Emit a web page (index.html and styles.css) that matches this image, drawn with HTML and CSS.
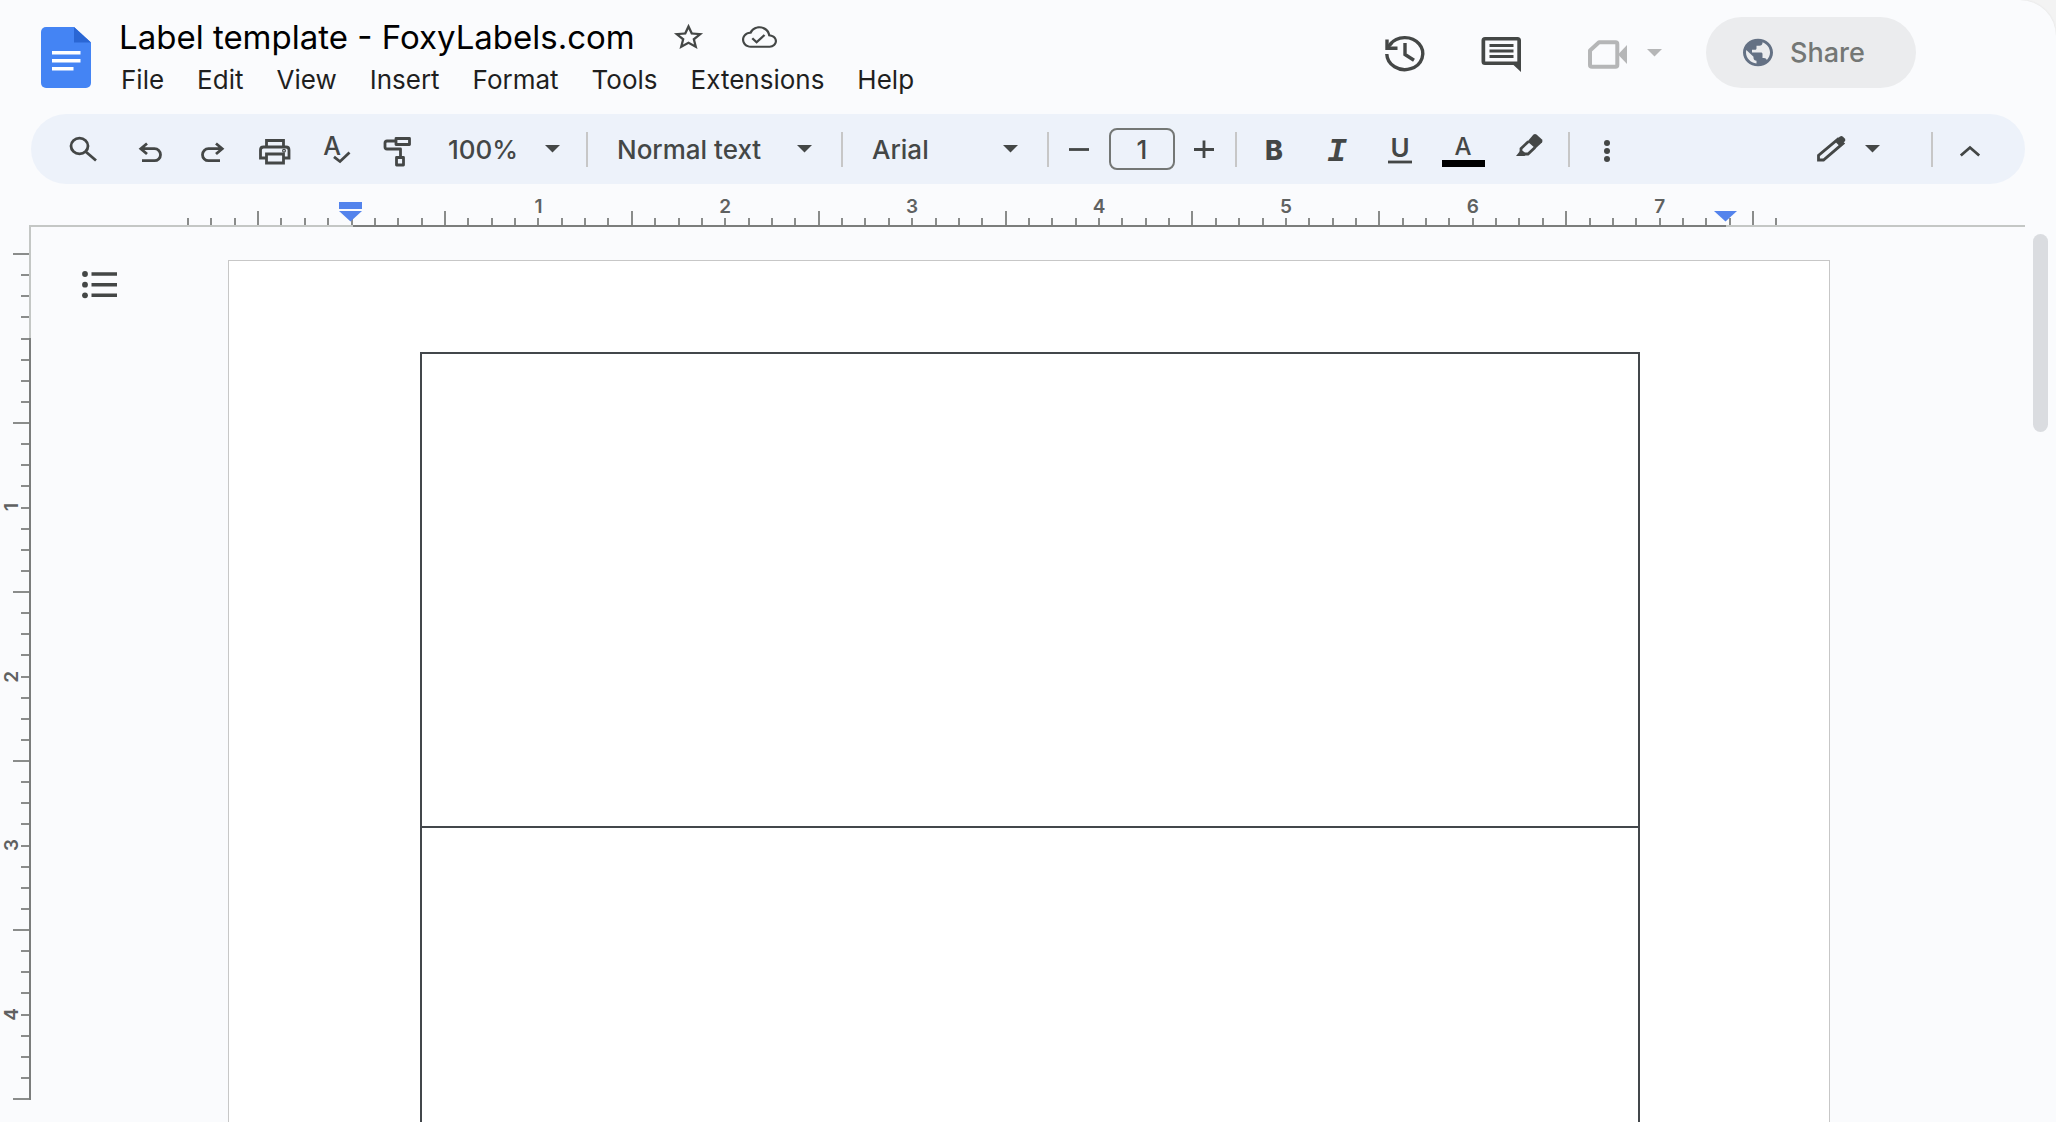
FILE: index.html
```
<!DOCTYPE html>
<html lang="en">
<head>
    <meta charset="UTF-8">
    <meta name="viewport" content="width=device-width, initial-scale=1.0">
    <title>Label template - FoxyLabels.com</title>
    <link rel="stylesheet" href="styles.css">
</head>
<body>

<div class="app">

<!-- Title, menus and document actions -->
<header class="header">
    <a class="logo" href="#" aria-label="Docs home">
        <svg width="50" height="61" viewBox="0 0 50 61">
            <path d="M5 0H33L50 15.500V56a5 5 0 0 1-5 5H5a5 5 0 0 1-5-5V5a5 5 0 0 1 5-5z" fill="#4484f4"/>
            <path d="M33 0L50 15.500H33z" fill="#2a66d4"/>
            <path d="M11 24h28.500v3.500H11zM11 32h28.500v3.500H11zM11 40h21.500v3.500H11z" fill="#fff"/>
        </svg>
    </a>

    <div class="title-block">
        <div class="title-row">
            <h1 class="title">Label template - FoxyLabels.com</h1>
            <button class="title-btn" aria-label="Star">
                <svg width="35" height="32" viewBox="0 0 24 24" preserveAspectRatio="none"><path fill="currentColor" d="M22 9.240l-7.190-.62L12 2 9.190 8.630 2 9.240l5.460 4.730L5.820 21 12 17.270 18.180 21l-1.630-7.030L22 9.240zM12 15.400l-3.760 2.270 1-4.280-3.320-2.880 4.380-.38L12 6.100l1.710 4.040 4.380.38-3.320 2.880 1 4.280L12 15.400z"/></svg>
            </button>
            <button class="title-btn" aria-label="Document status">
                <svg width="35" height="32" viewBox="0 0 24 24" preserveAspectRatio="none"><path fill="currentColor" d="M19.350 10.040C18.670 6.590 15.640 4 12 4 9.110 4 6.600 5.640 5.350 8.040 2.340 8.360 0 10.910 0 14c0 3.310 2.690 6 6 6h13c2.760 0 5-2.240 5-5 0-2.640-2.050-4.780-4.650-4.960zM19 18.500H6c-2.400 0-4.500-2-4.500-4.500 0-2.300 1.700-4.200 4.100-4.400l.8-.1.400-.7C7.800 6.800 9.800 5.500 12 5.500c2.800 0 5.300 2 5.800 4.800l.25 1.200 1.200.1c1.800.1 3.250 1.600 3.250 3.400 0 1.900-1.600 3.500-3.500 3.500zm-9-3.700l-2.400-2.400-1.100 1.100L10 17l6-6-1.100-1.100z"/></svg>
            </button>
        </div>
        <nav class="menu">
            <button>File</button>
            <button>Edit</button>
            <button>View</button>
            <button>Insert</button>
            <button>Format</button>
            <button>Tools</button>
            <button>Extensions</button>
            <button>Help</button>
        </nav>
    </div>

    <div class="actions">
        <button class="action-btn" aria-label="Version history">
            <svg width="40" height="40" viewBox="0 0 40 40" fill="none" stroke="currentColor" stroke-width="3.400">
                <path d="M1.800 21A18 16 0 1 0 5 11.500"/>
                <path d="M2 6.500V15.200H12.500"/>
                <path d="M2 15.200L7 9.500"/>
                <path d="M20 10V21.500L29 27.200"/>
            </svg>
        </button>
        <button class="action-btn" aria-label="Comments">
            <svg width="40" height="40" viewBox="0 0 40 40">
                <path fill="currentColor" fill-rule="evenodd" d="M4 4H36.500A3.500 3.500 0 0 1 40 7.500V39L32.500 32H4A3.500 3.500 0 0 1 .500 28.500V7.500A3.500 3.500 0 0 1 4 4zM4.200 7.400V28.600H36.300V7.400z"/>
                <path stroke="currentColor" stroke-width="3.200" d="M8.500 12.500H32.500M8.500 18H32.500M8.500 23.500H32.500"/>
            </svg>
        </button>
        <button class="meet-btn" aria-label="Video call">
            <svg width="40" height="40" viewBox="0 0 40 40">
                <path fill="none" stroke="currentColor" stroke-width="4" stroke-linejoin="round" d="M11 9.300H27.500Q29.300 9.300 29.300 11V32Q29.300 33.800 27.500 33.800H4Q2 33.800 2 32V17.500z"/>
                <path fill="currentColor" d="M30 21.500L39 12V31z"/>
            </svg>
            <svg class="caret" width="15" height="8" viewBox="0 0 15 8"><path fill="currentColor" d="M0 0H15L7.500 7.500z"/></svg>
        </button>
        <button class="share-btn">
            <svg width="36" height="33" viewBox="0 0 24 24" preserveAspectRatio="none"><path fill="#647184" d="M12 2C6.480 2 2 6.480 2 12s4.480 10 10 10 10-4.480 10-10S17.520 2 12 2zm-1 17.930c-3.950-.49-7-3.850-7-7.930 0-.62.080-1.210.210-1.790L9 15v1c0 1.100.9 2 2 2v1.930zm6.900-2.540c-.26-.81-1-1.390-1.900-1.390h-1v-3c0-.55-.45-1-1-1H8v-2h2c.55 0 1-.45 1-1V7h2c1.100 0 2-.9 2-2v-.41c2.930 1.190 5 4.060 5 7.410 0 2.080-.8 3.970-2.100 5.390z"/></svg>
            Share
        </button>
    </div>
</header>

<!-- Formatting toolbar -->
<div class="toolbar" role="toolbar">
    <div class="group first">
        <button class="tool" aria-label="Search the menus">
            <svg class="line" width="40" height="40" viewBox="0 0 40 40"><ellipse cx="15.500" cy="17" rx="8.500" ry="7.800"/><path d="M21.500 22.500L32 31.500"/></svg>
        </button>
        <button class="tool" aria-label="Undo">
            <svg class="line" width="40" height="40" viewBox="0 0 40 40"><path d="M20 14.500L13.800 19.700L20 25M14 19.700H27.500a6 6 0 0 1 0 12H15"/></svg>
        </button>
        <button class="tool" aria-label="Redo">
            <svg class="line" width="40" height="40" viewBox="0 0 40 40"><path d="M26 14.500L32.200 19.700L26 25M32 19.700H18.500a6 6 0 0 0 0 12H30"/></svg>
        </button>
        <button class="tool" aria-label="Print">
            <svg class="line" width="40" height="40" viewBox="0 0 40 40"><path d="M13.500 18V11.500H30.500V18M13 29H7.500V21Q7.500 18 10.500 18H33Q36 18 36 21V29H31M13.500 25H30.500V34H13.500z"/><circle cx="31" cy="21.700" r=".6"/></svg>
        </button>
        <button class="tool" aria-label="Spelling">
            <svg width="40" height="40" viewBox="0 0 40 40"><text class="glyph" x="16" y="26" font-size="25">A</text><path class="line" d="M18 27.800L24 32.500L33.500 23.500"/></svg>
        </button>
        <button class="tool" aria-label="Paint format">
            <svg class="line" width="40" height="40" viewBox="0 0 40 40"><path d="M17 9.500H30.500V15.500H17zM17 12H8Q6 12 6 14V18Q6 20 8 20H21.500V28M17.500 28.500H24.500V36H17.500z" stroke-linejoin="round"/></svg>
        </button>
    </div>

    <div class="dropdown zoom">
        <select aria-label="Zoom"><option>100%</option></select>
        <svg class="caret" width="15" height="8" viewBox="0 0 15 8"><path fill="currentColor" d="M0 0H15L7.500 7.500z"/></svg>
    </div>
    <span class="separator"></span>
    <div class="dropdown style">
        <select aria-label="Styles"><option>Normal text</option></select>
        <svg class="caret" width="15" height="8" viewBox="0 0 15 8"><path fill="currentColor" d="M0 0H15L7.500 7.500z"/></svg>
    </div>
    <span class="separator"></span>
    <div class="dropdown font">
        <select aria-label="Font"><option>Arial</option></select>
        <svg class="caret" width="15" height="8" viewBox="0 0 15 8"><path fill="currentColor" d="M0 0H15L7.500 7.500z"/></svg>
    </div>
    <span class="separator"></span>

    <button class="step" aria-label="Decrease font size">
        <svg class="line" width="40" height="40" viewBox="0 0 40 40"><path d="M10 20.500H30"/></svg>
    </button>
    <input class="font-size" type="text" value="1" aria-label="Font size">
    <button class="step" aria-label="Increase font size">
        <svg class="line" width="40" height="40" viewBox="0 0 40 40"><path d="M9 20.500H29M19 11.500V29"/></svg>
    </button>
    <span class="separator"></span>

    <div class="group">
        <button class="tool" aria-label="Bold">
            <svg width="40" height="40" viewBox="0 0 40 40"><text class="glyph bold" x="20" y="31" font-size="27">B</text></svg>
        </button>
        <button class="tool" aria-label="Italic">
            <svg width="40" height="40" viewBox="0 0 40 40"><text class="glyph italic" x="20" y="32" font-size="33">I</text></svg>
        </button>
        <button class="tool" aria-label="Underline">
            <svg width="40" height="40" viewBox="0 0 40 40"><text class="glyph underline" x="20" y="28" font-size="26">U</text><path class="line" d="M8 33H32"/></svg>
        </button>
        <button class="tool" aria-label="Text color">
            <svg width="40" height="40" viewBox="0 0 40 40"><text class="glyph" x="20" y="26" font-size="24">A</text><path d="M-1 31H42V38H-1z" fill="#000"/></svg>
        </button>
        <button class="tool" aria-label="Highlight color">
            <svg width="40" height="40" viewBox="0 0 40 40"><path fill="currentColor" d="M27.500 5.500Q29 4.600 30.500 5.500L36 10.500Q37 12 36 13.500L29.500 19.500L21.500 12.500z"/><path class="line" d="M22.500 12.500L15 19.500V22.500L18.500 25H22L29 18.500"/><path fill="currentColor" d="M14.500 21.500L20 25.500L18.500 27H10z"/></svg>
        </button>
    </div>
    <span class="separator"></span>
    <div class="group">
        <button class="tool" aria-label="More">
            <svg width="40" height="40" viewBox="0 0 40 40" fill="currentColor"><circle cx="20" cy="14" r="3"/><circle cx="20" cy="22" r="3"/><circle cx="20" cy="30" r="3"/></svg>
        </button>
    </div>

    <button class="mode-btn" aria-label="Editing mode">
        <svg width="40" height="40" viewBox="0 0 40 40"><path class="line" d="M7.500 31V26.500L27 10.200L32 14.400L12.500 31z"/><path fill="currentColor" d="M23.500 12L29 7.500Q30.500 6.600 32 7.700L34 9.800Q35 11.300 33.600 12.600L28.500 17z"/></svg>
        <svg class="caret" width="15" height="8" viewBox="0 0 15 8"><path fill="currentColor" d="M0 0H15L7.500 7.500z"/></svg>
    </button>
    <span class="separator"></span>
    <div class="group">
        <button class="tool" aria-label="Hide the menus">
            <svg class="line" width="40" height="40" viewBox="0 0 40 40"><path d="M10.800 26.500L20 18.500L29.200 26.500"/></svg>
        </button>
    </div>
</div>

<!-- Horizontal ruler -->
<div class="ruler-h">
    <div class="ticks" id="ticksH"></div>
    <div class="baseline"></div>
    <svg class="marker marker-left" width="23" height="20" viewBox="0 0 23 20"><path fill="#5383ec" d="M0 0H23V7H0zM0 9H23L11.500 19.500z"/></svg>
    <svg class="marker marker-right" width="23" height="20" viewBox="0 0 23 20"><path fill="#5383ec" d="M0 9H23L11.500 19.500z"/></svg>
</div>

<div class="workspace">
    <!-- Vertical ruler -->
    <div class="ruler-v">
        <div class="ticks" id="ticksV"></div>
        <div class="baseline"></div>
    </div>

    <aside class="outline">
        <button aria-label="Show document outline">
            <svg width="40" height="40" viewBox="0 0 40 40"><g fill="currentColor"><circle cx="5" cy="9" r="2.900"/><circle cx="5" cy="19.700" r="2.900"/><circle cx="5" cy="30.300" r="2.900"/></g><path stroke="currentColor" stroke-width="3.400" d="M11.500 9H37M11.500 19.700H37M11.500 30.300H37"/></svg>
        </button>
    </aside>

    <main class="sheet">
        <table class="labels">
            <tbody>
                <tr><td></td></tr>
                <tr><td></td></tr>
            </tbody>
        </table>
    </main>

    <div class="scroll-gutter"><div class="scroll-thumb"></div></div>
</div>

</div>

<script>
    // Ticks are 1/8 inch apart, half inches get a long mark, full inches a number
    function buildTicks(id, from, to) {
        const ticks = document.getElementById(id);
        for (let i = from; i <= to; i++) {
            const tick = document.createElement('span');
            tick.className = 'tick';
            if (i > 0 && i % 8 === 0) {
                const label = document.createElement('span');
                label.className = 'label';
                label.textContent = i / 8;
                tick.appendChild(label);
            }
            const mark = document.createElement('span');
            mark.className = Math.abs(i % 8) === 4 ? 'mark long' : 'mark';
            tick.appendChild(mark);
            ticks.appendChild(tick);
        }
    }

    buildTicks('ticksH', -7, 61);
    buildTicks('ticksV', -4, 36);
</script>

</body>
</html>
```
FILE: styles.css
```
* {
    box-sizing: border-box;
}

body {
    margin: 0;
    background-color: #f3f3f3;
    font-family: Inter, "Open Sans", sans-serif;
    color: #444746;
}

button, select, input {
    margin: 0;
    padding: 0;
    border: none;
    background: none;
    font: inherit;
    color: inherit;
}

button {
    cursor: pointer;
}

svg {
    display: block;
    flex: none;
    overflow: visible;
}

.app {
    display: flex;
    flex-direction: column;
    height: 100vh;
    overflow: hidden;
    background-color: #fafbfd;
    border-radius: 0 36px 0 0;
    box-shadow: 0 0 2px #ddd;
}

/* Header */
.header {
    display: flex;
    height: 114px;
    padding: 0 140px 0 41px;
    flex: none;
}

.logo {
    margin-top: 27px;
}

.title-block {
    margin-left: 28px;
}

.title-row {
    display: flex;
    align-items: center;
    gap: 36px;
    height: 40px;
    margin-top: 17px;
}

.title {
    margin: 0;
    font-size: 33px;
    font-weight: 400;
    line-height: 36px;
    color: #000;
    white-space: nowrap;
}

.menu {
    display: flex;
    gap: 33px;
    margin-top: 8px;
    padding-left: 2px;
    font-size: 26px;
    line-height: 30px;
    color: #1f1f1f;
}

.actions {
    display: flex;
    align-items: center;
    gap: 44px;
    height: 105px;
    margin-left: auto;
}

.action-btn {
    padding: 0 6px;
}

.meet-btn {
    display: flex;
    align-items: center;
    gap: 19px;
    padding-left: 17px;
    color: #b5b6b7;
}

.share-btn {
    display: flex;
    align-items: center;
    gap: 14px;
    width: 210px;
    height: 71px;
    padding-left: 34px;
    border-radius: 36px;
    background-color: #ebecee;
    font-size: 27px;
    font-weight: 500;
    color: #747775;
}

/* Toolbar */
.toolbar {
    display: flex;
    align-items: center;
    flex: none;
    height: 70px;
    margin: 0 31px;
    padding-right: 13px;
    border-radius: 35px;
    background-color: #edf2fa;
    font-size: 26px;
    font-weight: 500;
}

.group {
    display: flex;
    padding: 0 11px 0 5px;
}

.group.first {
    padding: 0 0 0 21px;
}

.tool {
    display: flex;
    justify-content: center;
    width: 63px;
}

.line {
    fill: none;
    stroke: currentColor;
    stroke-width: 2.8px;
}

.glyph {
    fill: currentColor;
    text-anchor: middle;
    font-weight: 500;
}

.glyph.underline {
    font-weight: 600;
}

.glyph.bold {
    font-weight: 800;
}

.glyph.italic {
    font-family: "Liberation Mono", monospace;
    font-style: italic;
    font-weight: 700;
}

.separator {
    width: 2px;
    height: 35px;
    background-color: #c7c7c7;
}

.dropdown {
    display: grid;
    align-items: center;
}

.dropdown select,
.dropdown .caret {
    grid-area: 1 / 1;
}

.dropdown select {
    width: 100%;
    height: 40px;
    padding-left: 29px;
    appearance: none;
}

.dropdown .caret {
    justify-self: end;
    margin-right: 29px;
    pointer-events: none;
}

.dropdown.zoom {
    width: 156px;
}

.dropdown.zoom select {
    padding-left: 18px;
}

.dropdown.zoom .caret {
    margin-right: 26px;
}

.dropdown.style {
    width: 253px;
}

.dropdown.font {
    width: 204px;
}

.step {
    display: flex;
    justify-content: center;
    width: 60px;
}

.font-size {
    width: 66px;
    height: 42px;
    border: 2px solid #747775;
    border-radius: 8px;
    text-align: center;
}

.mode-btn {
    display: flex;
    align-items: center;
    gap: 14px;
    margin-left: auto;
    padding-right: 51px;
}

/* Rulers */
.ruler-h {
    position: relative;
    flex: none;
}

.ruler-h .ticks {
    display: flex;
    justify-content: space-between;
    height: 41px;
    padding: 0 278px 0 187px;
}

.ruler-h .tick {
    display: flex;
    flex-direction: column;
    align-items: center;
    justify-content: flex-end;
    width: 2px;
}

.mark {
    flex: none;
    background-color: #8a8c8b;
}

.ruler-h .mark {
    width: 2px;
    height: 7px;
}

.ruler-h .mark.long {
    height: 14px;
}

.label {
    font-size: 19px;
    font-weight: 600;
    line-height: 18px;
    color: #5f6161;
}

.ruler-h .label {
    margin-bottom: 2px;
}

.ruler-h .baseline {
    height: 2px;
    margin: 0 31px 0 29px;
    background: linear-gradient(to right, #c4c7c5 324px, #7b7d7c 324px calc(100% - 299px), #c4c7c5 calc(100% - 299px));
}

.marker {
    position: absolute;
    top: 18px;
}

.marker-left {
    left: 339px;
}

.marker-right {
    right: 319px;
}

.ruler-v {
    display: flex;
    width: 31px;
    margin-bottom: 22px;
    flex: none;
}

.ruler-v .ticks {
    display: flex;
    flex-direction: column;
    justify-content: space-between;
    width: 29px;
    padding-top: 26px;
}

.ruler-v .tick {
    display: flex;
    align-items: center;
    justify-content: flex-end;
    height: 2px;
}

.ruler-v .mark {
    width: 8px;
    height: 2px;
}

.ruler-v .mark.long {
    width: 16px;
}

.ruler-v .label {
    writing-mode: vertical-rl;
    transform: rotate(180deg);
}

.ruler-v .baseline {
    width: 2px;
    background: linear-gradient(#c4c7c5 111px, #7b7d7c 111px);
}

/* Document area */
.workspace {
    display: flex;
    flex: 1;
    min-height: 0;
}

.outline {
    width: 197px;
    padding: 38px 0 0 49px;
    flex: none;
}

.sheet {
    flex: 1;
    margin-top: 33px;
    padding: 91px 189px 0 191px;
    border: 1px solid #c7c7c7;
    border-bottom: none;
    background-color: #fff;
    overflow: hidden;
}

.labels {
    width: 100%;
    border-collapse: collapse;
}

.labels td {
    height: 474px;
    padding: 0;
    border: 2px solid #43474b;
}

.scroll-gutter {
    display: flex;
    justify-content: flex-end;
    width: 226px;
    padding: 7px 8px 0 0;
    flex: none;
}

.scroll-thumb {
    width: 15px;
    height: 198px;
    border-radius: 8px;
    background-color: #dadce0;
}
```
